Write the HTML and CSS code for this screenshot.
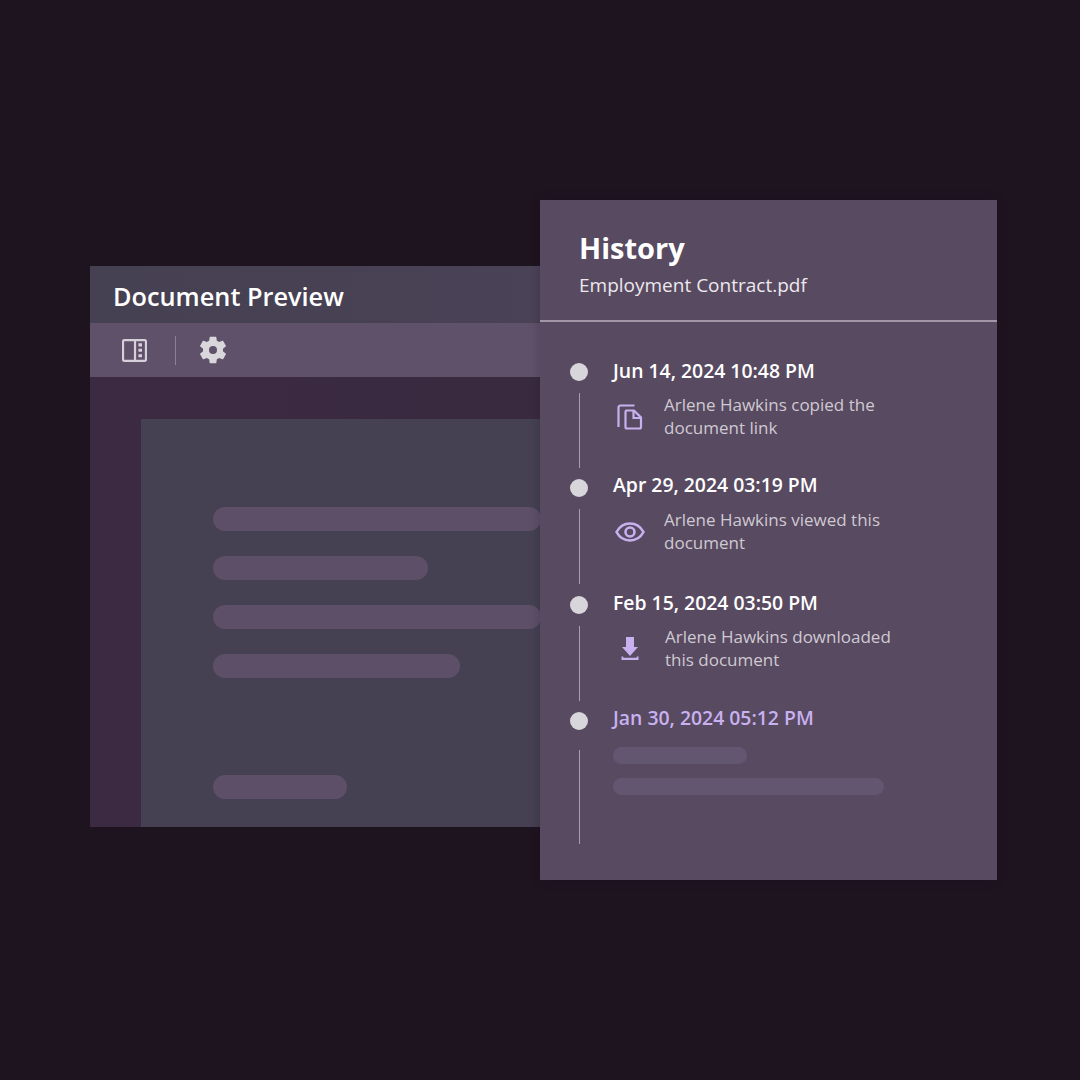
FILE: index.html
```html
<!DOCTYPE html>
<html lang="en">
<head>
<meta charset="utf-8">
<title>Document history</title>
<link rel="stylesheet" href="styles.css">
</head>
<body>
<main class="stage">
  <section class="doc">
    <header class="doc-head">Document Preview</header>
    <div class="doc-tools">
      <svg class="tool-panel" viewBox="0 0 24 24" fill="none" stroke="#d6d0da" stroke-width="2.100">
        <rect x="1" y="2" width="22" height="20" rx="1.200"/>
        <path d="M12.500 2v20"/>
        <path d="M15.800 6.600h3.400M15.800 11.800h3.400M15.800 17h3.400" stroke-width="3"/>
      </svg>
      <span class="tool-sep"></span>
      <svg class="tool-gear" viewBox="0 0 24 24" fill="#d9d6dc"><path fill-rule="evenodd" d="M19.430 12.980c.04-.32.07-.64.07-.98s-.03-.66-.07-.98l2.110-1.650a.5.5 0 0 0 .12-.64l-2-3.460a.5.5 0 0 0-.61-.22l-2.490 1a7.300 7.300 0 0 0-1.690-.98l-.38-2.650A.49.49 0 0 0 14 2h-4a.49.49 0 0 0-.49.42l-.38 2.650c-.61.25-1.170.59-1.690.98l-2.490-1a.5.5 0 0 0-.61.22l-2 3.460a.49.49 0 0 0 .12.64l2.110 1.650c-.04.32-.07.65-.07.98s.03.66.07.98l-2.110 1.650a.5.5 0 0 0-.12.64l2 3.460c.12.22.39.3.61.22l2.490-1c.52.4 1.080.73 1.690.98l.38 2.650c.03.24.24.42.49.42h4c.25 0 .46-.18.49-.42l.38-2.650c.61-.25 1.170-.59 1.690-.98l2.490 1c.23.09.49 0 .61-.22l2-3.460a.5.5 0 0 0-.12-.64l-2.110-1.650zM12 15a3 3 0 1 1 0-6 3 3 0 0 1 0 6z"/></svg>
    </div>
    <div class="doc-body">
      <div class="page">
        <span class="bar bar-full"></span>
        <span class="bar bar-a"></span>
        <span class="bar bar-full"></span>
        <span class="bar bar-b"></span>
        <span class="bar bar-c"></span>
      </div>
    </div>
  </section>

  <section class="history">
    <header class="hist-head">
      <h1 class="hist-title">History</h1>
      <p class="hist-file">Employment Contract.pdf</p>
    </header>
    <ol class="timeline">
      <li class="event">
        <div class="rail"><span class="dot"></span><span class="line"></span></div>
        <div class="event-main main-first">
          <div class="date">Jun 14, 2024 10:48 PM</div>
          <div class="detail">
            <span class="ico-box">
              <svg class="ico ico-copy" viewBox="0 0 26 26" fill="none" stroke="#c9b1f0" stroke-width="2.200"><path d="M17.500 1.500H3.500a2 2 0 0 0-2 2V23"/><path d="M8.500 6.500H17l7 7V23a1.500 1.500 0 0 1-1.500 1.500h-12.500a1.500 1.500 0 0 1-1.500-1.500V8a1.500 1.500 0 0 1 1.500-1.500z"/><path d="M16.500 6.500v7.500H24"/></svg>
            </span>
            <p class="desc">Arlene Hawkins copied the<br>document link</p>
          </div>
        </div>
      </li>
      <li class="event">
        <div class="rail"><span class="dot"></span><span class="line"></span></div>
        <div class="event-main main-second">
          <div class="date">Apr 29, 2024 03:19 PM</div>
          <div class="detail detail-low">
            <span class="ico-box">
              <svg class="ico ico-eye" viewBox="0 0 30 24" fill="none" stroke="#c9b1f0" stroke-width="2.600"><path d="M1.500 12C4.500 6.500 9.500 3.500 15 3.500S25.500 6.500 28.500 12c-3 5.500-8 8.500-13.500 8.500S4.500 17.500 1.500 12z"/><circle cx="15" cy="12" r="4.500"/></svg>
            </span>
            <p class="desc">Arlene Hawkins viewed this<br>document</p>
          </div>
        </div>
      </li>
      <li class="event">
        <div class="rail"><span class="dot"></span><span class="line"></span></div>
        <div class="event-main main-third">
          <div class="date">Feb 15, 2024 03:50 PM</div>
          <div class="detail detail-wide">
            <span class="ico-box">
              <svg class="ico" viewBox="0 0 24 24" fill="#c9b1f0"><path d="M8 1h8v10h4l-8 9-8-9h4z"/><path d="M3.500 20.500h1.800v1.300h13.400v-1.300h1.800V24h-17z"/></svg>
            </span>
            <p class="desc">Arlene Hawkins downloaded<br>this document</p>
          </div>
        </div>
      </li>
      <li class="event event-last">
        <div class="rail"><span class="dot"></span><span class="line"></span></div>
        <div class="event-main main-second">
          <div class="date date-accent">Jan 30, 2024 05:12 PM</div>
          <span class="ghost ghost-a"></span>
          <span class="ghost ghost-b"></span>
        </div>
      </li>
    </ol>
  </section>
</main>
</body>
</html>
```
FILE: styles.css
```css
* { box-sizing: border-box; }
html, body { margin: 0; padding: 0; }
body {
  width: 1080px;
  height: 1080px;
  background: #1e1420;
  font-family: "Open Sans", "Noto Sans", sans-serif;
  overflow: hidden;
}
.stage { position: relative; width: 1080px; height: 1080px; }

.doc {
  position: absolute;
  left: 90px;
  top: 266px;
  width: 452px;
  height: 561px;
  display: flex;
  flex-direction: column;
  background: #3a2940;
}
.doc-head {
  height: 57px;
  padding: 2px 0 0 23px;
  display: flex;
  align-items: center;
  background: linear-gradient(90deg, #454052, #4a4256);
  color: #fff;
  font-size: 25.300px;
  font-weight: 600;
}
.doc-tools {
  height: 54px;
  padding-left: 32px;
  display: flex;
  align-items: center;
  background: #5f5169;
}
.tool-panel { width: 25px; height: 25px; }
.tool-sep { width: 1px; height: 29px; margin: 0 21px 0 28px; background: #8c8294; }
.tool-gear { width: 32px; height: 32px; }
.doc-body {
  flex: 1;
  padding: 42px 0 0 51px;
  display: flex;
  background: linear-gradient(90deg, #3c2a42, #392a40);
  min-height: 0;
}
.page {
  flex: 1;
  padding: 88px 0 0 72px;
  display: flex;
  flex-direction: column;
  align-items: flex-start;
  gap: 25px;
  background: #454052;
}
.bar { display: block; height: 24px; border-radius: 12px; background: #5d4f67; }
.bar-full { width: 328px; }
.bar-a { width: 215px; }
.bar-b { width: 247px; }
.bar-c { width: 134px; margin-top: 72px; }

.history {
  position: absolute;
  left: 540px;
  top: 200px;
  width: 457px;
  height: 680px;
  background: #584a60;
  box-shadow: 0 0 10px rgba(20, 10, 25, .2);
}
.hist-head {
  height: 122px;
  padding: 28px 0 0 39px;
  border-bottom: 2px solid #a197a7;
}
.hist-title {
  margin: 0;
  color: #fff;
  font-size: 29px;
  line-height: 40px;
  font-weight: 700;
}
.hist-file {
  margin: 2px 0 0;
  color: #ece8ee;
  font-size: 19px;
  line-height: 30px;
}
.timeline { list-style: none; margin: 0; padding: 41px 0 0 30px; }
.event { height: 116.300px; flex: none; display: flex; }
.event-last { height: auto; }
.rail { width: 18px; display: flex; flex-direction: column; align-items: center; }
.dot { width: 18px; height: 18px; flex: none; border-radius: 50%; background: #d8d6da; }
.line { width: 1px; height: 75px; flex: none; margin-top: 12px; background: #a79fac; }
.event-last .line { height: 94px; margin-top: 20px; }
.event-main { margin-left: 25px; }
.main-first { margin-top: -5px; }
.main-second { margin-top: -7px; }
.main-third { margin-top: -6px; }
.date {
  color: #fff;
  font-size: 19.400px;
  line-height: 26px;
  font-weight: 600;
}
.date-accent { color: #c9b1f0; }
.detail { display: flex; align-items: flex-start; margin-top: 9px; }
.detail-low { margin-top: 10px; }
.ico-box { width: 34px; height: 46px; flex: none; display: flex; align-items: center; justify-content: center; }
.ico { width: 24px; height: 24px; }
.ico-copy { width: 26px; height: 26px; margin: 2px 0 0 -1px; }
.ico-eye { width: 30px; margin-top: 2px; }
.desc {
  margin: 0 0 0 17px;
  color: #cfc9d3;
  font-size: 17px;
  line-height: 23px;
  white-space: nowrap;
}
.detail-wide .desc { margin-left: 18px; }
.ghost { display: block; height: 17px; border-radius: 9px; background: #635670; }
.ghost-a { width: 134px; margin-top: 16px; }
.ghost-b { width: 271px; margin-top: 14px; }
```
